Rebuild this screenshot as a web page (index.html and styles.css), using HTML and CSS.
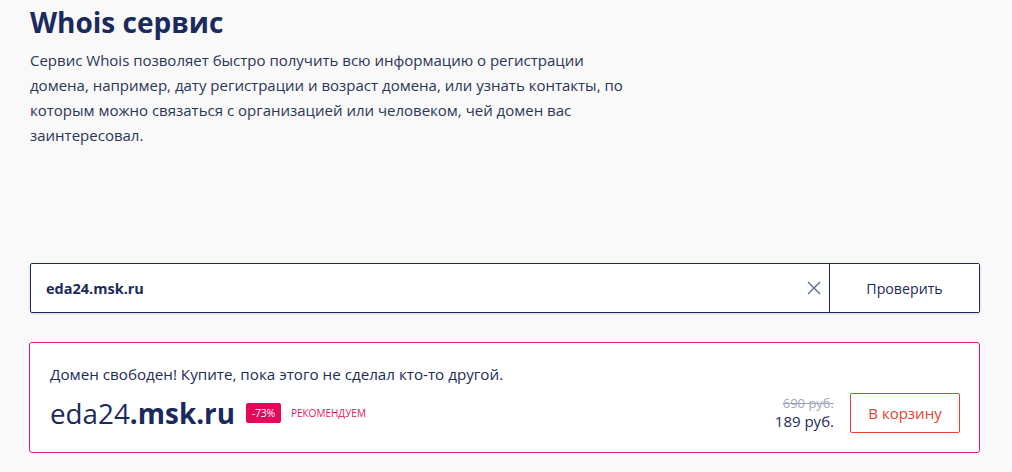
FILE: index.html
```html
<!DOCTYPE html>
<html lang="ru">
<head>
<meta charset="utf-8">
<title>Whois сервис</title>
<link rel="stylesheet" href="styles.css">
</head>
<body>
<main class="page">
  <h1 class="title">Whois сервис</h1>
  <p class="intro">Сервис Whois позволяет быстро получить всю информацию о регистрации домена, например, дату регистрации и возраст домена, или узнать контакты, по которым можно связаться с организацией или человеком, чей домен вас заинтересовал.</p>

  <form class="search">
    <div class="search-field">
      <span class="search-value">eda24.msk.ru</span>
      <span class="search-clear">
        <svg width="14" height="14" viewBox="0 0 14 14"><path d="M1 1 L13 13 M13 1 L1 13" stroke="#5b6a8c" stroke-width="1.3" fill="none"/></svg>
      </span>
    </div>
    <button type="button" class="search-btn">Проверить</button>
  </form>

  <section class="result">
    <div class="result-msg">Домен свободен! Купите, пока этого не сделал кто-то другой.</div>
    <div class="result-row">
      <div class="domain">eda24<b>.msk.ru</b></div>
      <span class="badge">-73%</span>
      <span class="rec">РЕКОМЕНДУЕМ</span>
      <div class="prices">
        <span class="old">690 руб.</span>
        <span class="new">189 руб.</span>
      </div>
      <button type="button" class="cart">В корзину</button>
    </div>
  </section>
</main>
</body>
</html>
```
FILE: styles.css
```css
* { box-sizing: border-box; }
html, body { margin: 0; padding: 0; background: #f9f9f9; }
body { font-family: "Open Sans", "Noto Sans", sans-serif; color: #1c2b5a; }
.page { padding: 4px 32px 0 30px; }

.title {
  margin: 0;
  font-size: 28px;
  line-height: 36px;
  font-weight: 700;
  color: #1b2a5c;
}
.intro {
  margin: 8px 0 0;
  max-width: 610px;
  font-size: 15px;
  line-height: 25px;
  color: #2a3558;
}

.search {
  margin-top: 115px;
  display: flex;
  height: 50px;
  border: 1px solid #1b2a5c;
  border-radius: 2px;
  background: #fff;
  box-shadow: 0 1px 3px rgba(0,0,0,0.15);
}
.search-field {
  flex: 1;
  display: flex;
  align-items: center;
  padding: 0 8px 0 15px;
}
.search-value {
  flex: 1;
  font-size: 14.5px;
  font-weight: 700;
  color: #1b2a5c;
}
.search-clear { display: flex; width: 14px; height: 14px; }
.search-btn {
  width: 150px;
  border: 0;
  border-left: 1px solid #1b2a5c;
  background: #fff;
  font-family: inherit;
  font-size: 14.2px;
  color: #1b2a5c;
  padding: 0;
}

.result {
  margin-top: 29px;
  margin-left: -1px;
  border: 1px solid #df1590;
  border-radius: 3px;
  background: #fff;
  padding: 21px 19px 19px 20px;
}
.result-msg {
  font-size: 15.2px;
  line-height: 20px;
  color: #1c2b5a;
}
.result-row {
  margin-top: 9px;
  display: flex;
  align-items: center;
  height: 40px;
}
.domain {
  font-size: 27.8px;
  line-height: 34px;
  color: #1b2a5c;
}
.domain b { font-weight: 700; }
.badge {
  margin-left: 11px;
  width: 35px;
  height: 20px;
  border-radius: 2px;
  background: #e6065a;
  color: #fff;
  font-size: 10.5px;
  line-height: 20px;
  text-align: center;
  letter-spacing: -0.3px;
}
.rec {
  margin-left: 10px;
  font-size: 10px;
  color: #e0175f;
  flex: 1;
}
.prices {
  display: flex;
  flex-direction: column;
  align-items: flex-end;
  margin-right: 16px;
}
.old {
  font-size: 13px;
  line-height: 16px;
  color: #a0a6b6;
  text-decoration: line-through;
}
.new {
  font-size: 15px;
  line-height: 20px;
  color: #1c2b5a;
}
.cart {
  width: 110px;
  height: 40px;
  border: 1px solid #e8412c;
  border-radius: 2px;
  background: #fff;
  color: #e8412c;
  font-family: inherit;
  font-size: 15px;
  padding: 0;
}
```
